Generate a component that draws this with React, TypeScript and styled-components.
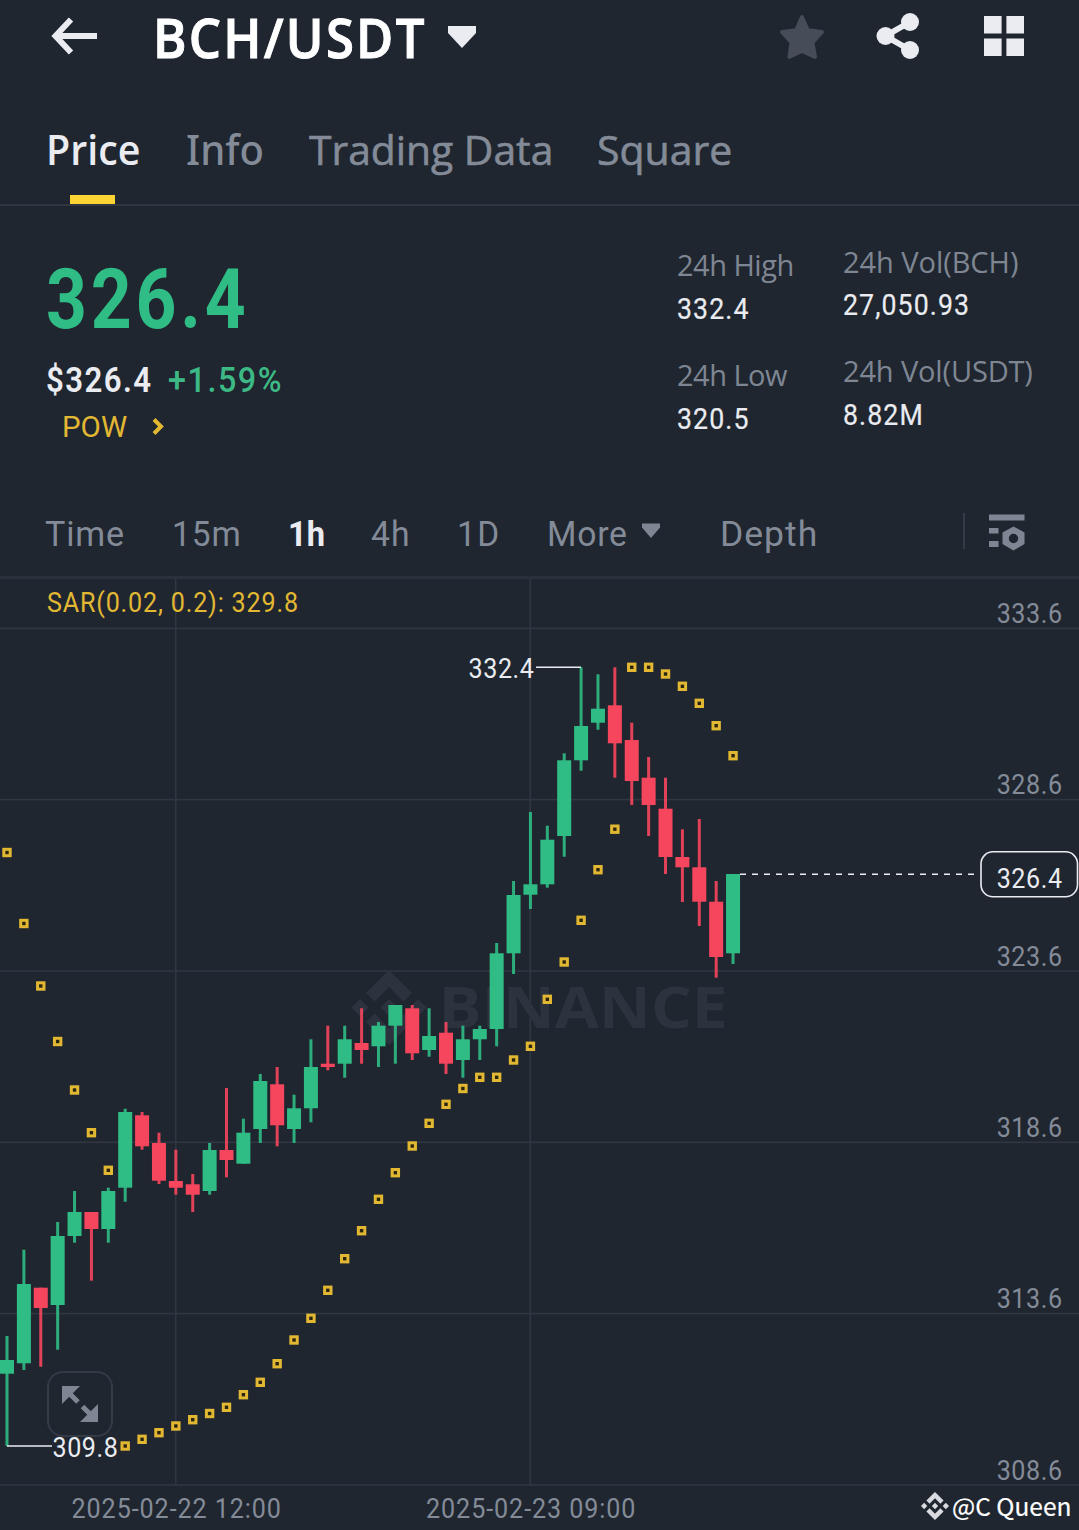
import React from "react";
import styled, { createGlobalStyle } from "styled-components";

const c = {
  bg: "#1f262f",
  line: "#303742",
  text: "#eaecf1",
  muted: "#848b98",
  green: "#2fbd85",
  red: "#f6465d",
  yellow: "#e2b833",
};

const din = `Roboto, "Liberation Sans", sans-serif`;
const plex = `"Open Sans", "Noto Sans", sans-serif`;

const Global = createGlobalStyle`
  body { margin: 0; background: ${c.bg}; }
  * { box-sizing: border-box; }
`;

const Page = styled.main`
  width: 1079px;
  height: 1530px;
  overflow: hidden;
  display: flex;
  flex-direction: column;
  background: ${c.bg};
  color: ${c.text};
  font-family: ${din};
`;

const Label = styled.span<{
  $size: number;
  $weight?: number;
  $color?: string;
  $spacing?: number;
  $font?: string;
  $lh?: number;
  $stretch?: number;
  $stroke?: number;
}>`
  display: block;
  white-space: nowrap;
  font-family: ${(p) => p.$font ?? din};
  font-size: ${(p) => p.$size}px;
  font-weight: ${(p) => p.$weight ?? 400};
  color: ${(p) => p.$color ?? c.text};
  letter-spacing: ${(p) => p.$spacing ?? 0}px;
  line-height: ${(p) => p.$lh ?? 30}px;
  transform: scaleX(${(p) => p.$stretch ?? 1});
  transform-origin: left center;
  -webkit-text-stroke: ${(p) => p.$stroke ?? 0}px currentColor;
`;

const Header = styled.header`
  flex: none;
  height: 76px;
  padding: 0 55px 4px 51px;
  display: flex;
  align-items: center;
`;

const PairButton = styled.div`
  width: 323px;
  margin-left: 56px;
  padding-top: 1px;
  display: flex;
  align-items: center;
  justify-content: space-between;
`;

const PairName = styled.div`
  width: 280px;
  padding-top: 2px;
`;

const Actions = styled.div`
  margin-left: auto;
  display: flex;
  align-items: center;
`;

const ActionIcon = styled.svg<{ $gap?: number }>`
  display: block;
  flex: none;
  overflow: visible;
  margin-left: ${(p) => p.$gap ?? 0}px;
`;

const TabBar = styled.nav`
  flex: none;
  height: 130px;
  padding: 52px 0 0 46px;
  display: grid;
  grid-template-columns: 140px 123px 288px 1fr;
  border-bottom: 2px solid #303742;
`;

const Tab = styled.div`
  display: flex;
  flex-direction: column;
`;

const TabMark = styled.i`
  width: 45px;
  height: 9px;
  margin: 25px 0 0 24px;
  background: #fcd535;
`;

const Summary = styled.section`
  flex: none;
  height: 284px;
  display: grid;
  grid-template-columns: 631px 166px 1fr;
  padding-left: 46px;
`;

const PriceColumn = styled.div`
  padding-top: 52px;
`;

const FiatRow = styled.div`
  display: grid;
  grid-template-columns: 122px 1fr;
  margin-top: 18px;
`;

const TagRow = styled.div`
  display: flex;
  align-items: center;
  height: 32px;
  margin-top: 11px;
  padding-left: 16px;
`;

const TagName = styled.div`
  width: 90px;
`;

const StatColumn = styled.div<{ $top: number; $gap: number }>`
  display: flex;
  flex-direction: column;
  gap: ${(p) => p.$gap}px;
  padding-top: ${(p) => p.$top}px;
`;

const Stat = styled.div`
  display: flex;
  flex-direction: column;
  gap: 13.5px;
`;

const Periods = styled.div`
  flex: none;
  height: 89px;
  padding-left: 45px;
  display: grid;
  grid-template-columns: 127px 116px 83px 86px 90px 95px 78px 243px 26px 1fr;
  align-items: center;
  border-bottom: 3px solid #2b313c;
`;

const PeriodName = styled.div`
  padding-top: 2px;
`;

const Divider = styled.i`
  width: 2px;
  height: 36px;
  margin-bottom: 4px;
  background: #343b46;
`;

const ChartBox = styled.section`
  position: relative;
  flex: none;
  height: 951px;
`;

const ChartSvg = styled.svg`
  display: block;
`;

const ExpandButton = styled.button`
  position: absolute;
  left: 47px;
  top: 792px;
  width: 66px;
  height: 66px;
  padding: 0;
  display: grid;
  place-items: center;
  border: 2.5px solid #343a46;
  border-radius: 16px;
  background: transparent;
`;

const Credit = styled.div`
  position: absolute;
  left: 921px;
  top: 911px;
  height: 32px;
  display: flex;
  align-items: center;
  gap: 3px;
`;

const LOGO =
  "M16.624 13.9202l2.7175 2.7154-7.353 7.353-7.353-7.352 2.7175-2.7164 4.6355 4.6595 4.6356-4.6595zm4.6366-4.6366L24 12l-2.7154 2.7164L18.5682 12l2.6924-2.7164zm-9.272.001l2.7163 2.6914-2.7164 2.7174v-.001L9.2721 12l2.7164-2.7154zm-9.2722-.001L5.4088 12l-2.6914 2.6924L0 12l2.7164-2.7164zM11.9885.0115l7.353 7.329-2.7174 2.7154-4.6356-4.6356-4.6355 4.6595-2.7174-2.7154 7.353-7.353z";

/* rising?, wick top, body top, body bottom, wick bottom */
type Candle = [0 | 1, number, number, number, number];
const candles: Candle[] = [
  [1, 1336, 1360, 1373.7, 1446],
  [1, 1249.7, 1284, 1363.3, 1370],
  [0, 1287.7, 1287.7, 1308, 1366.7],
  [1, 1222, 1236, 1305, 1349.7],
  [1, 1191, 1212, 1236, 1242.7],
  [0, 1212, 1212, 1229, 1280.7],
  [1, 1187.7, 1191, 1229, 1242.7],
  [1, 1108.7, 1112, 1187.7, 1201.7],
  [0, 1112, 1115.3, 1146.3, 1149.7],
  [0, 1132.7, 1143, 1180.7, 1184],
  [0, 1149.7, 1181, 1187.7, 1194.7],
  [0, 1174, 1184.3, 1194.7, 1212],
  [1, 1143, 1150, 1191, 1194.7],
  [0, 1088, 1150, 1160, 1177.3],
  [1, 1118.7, 1132.7, 1163.7, 1163.7],
  [1, 1074, 1081, 1129, 1143],
  [0, 1067, 1084.3, 1125.3, 1146.3],
  [1, 1094.7, 1108.3, 1129, 1143],
  [1, 1039.3, 1067, 1108.3, 1122.3],
  [0, 1025.7, 1063.7, 1067, 1070.3],
  [1, 1025.7, 1039.3, 1063.7, 1077.7],
  [0, 1008.3, 1043, 1050, 1063.7],
  [1, 1022, 1025.7, 1046.3, 1067],
  [1, 1005, 1005, 1025.7, 1063.7],
  [0, 1005, 1008.3, 1053.3, 1060],
  [1, 1008.3, 1036, 1050, 1056.7],
  [0, 1022, 1032.7, 1063.7, 1074],
  [1, 1025.7, 1039.3, 1060, 1077.7],
  [1, 1025.7, 1029, 1039.3, 1060],
  [1, 943, 953.3, 1029, 1046.3],
  [1, 881, 895, 953.3, 974],
  [1, 812, 884.3, 894.7, 909],
  [1, 825.7, 839.7, 884.3, 887.7],
  [1, 753.3, 760.3, 836, 856.7],
  [1, 667.3, 726, 760.3, 770.7],
  [1, 674.3, 708.7, 722.7, 729.7],
  [0, 667.3, 705.3, 743.3, 777.7],
  [0, 722.7, 740, 781, 805],
  [0, 757, 777.7, 805, 836],
  [0, 777.7, 808.7, 857, 874],
  [0, 829.3, 857, 867.3, 902],
  [0, 819, 867.3, 901.7, 926],
  [0, 881, 901.7, 957, 977.7],
  [1, 874, 874, 953.3, 964],
];

const sar = [
  852.5, 923.5, 986, 1041.5, 1090, 1132.7, 1170.3, 1446, 1439.3, 1432.7, 1426,
  1419.7, 1413.5, 1407.3, 1394.7, 1382.3, 1363.7, 1340, 1318.3, 1290.3, 1258.7,
  1230.7, 1199.3, 1172.7, 1146, 1123.3, 1104.3, 1088.5, 1077.3, 1077.3, 1060,
  1046.3, 999.3, 962, 920.3, 869.7, 829.2, 667.3, 667.3, 674, 686.3, 703.3,
  725.7, 755.7,
];

const levels: [string, number][] = [
  ["333.6", 628.4],
  ["328.6", 799.6],
  ["323.6", 971],
  ["318.6", 1142.3],
  ["313.6", 1313.6],
  ["308.6", 1485],
];

const slot = (i: number) => 7 + i * 16.885;

const NoteText = styled.text<{ $color: string }>`
  font-family: ${din};
  font-size: 27px;
  fill: ${(p) => p.$color};
`;

const SQUEEZE = 0.93;

function Note(props: { x: number; y: number; width: number; color?: string; children: string }) {
  return (
    <NoteText
      $color={props.color ?? c.muted}
      transform={`translate(${props.x} ${props.y}) scale(${SQUEEZE} 1)`}
      textLength={props.width / SQUEEZE}
    >
      {props.children}
    </NoteText>
  );
}

function Chart() {
  return (
    <ChartSvg width="1079" height="951" viewBox="0 579 1079 951">
      {levels.map(([t, y]) => (
        <rect key={t} x="0" y={y - 0.8} width="1079" height="1.6" fill={c.line} />
      ))}
      {[175.7, 530.3].map((x) => (
        <rect key={x} x={x - 0.8} y="579" width="1.6" height="906" fill={c.line} />
      ))}
      <g fill="#2d333e">
        <path transform="translate(351.5 970) scale(3.13)" d={LOGO} />
        <text
          x="438.5"
          y="1028"
          textLength="289"
          lengthAdjust="spacingAndGlyphs"
          fontFamily='"Open Sans", sans-serif'
          fontWeight="700"
          fontSize="58"
        >
          BINANCE
        </text>
      </g>
      {candles.map(([up, h, t, b, l], i) => (
        <g key={i} fill={up ? c.green : c.red}>
          <rect x={slot(i) - 1.5} y={h} width="3" height={l - h} opacity="0.9" />
          <rect x={slot(i) - 7} y={t} width="14" height={b - t} />
        </g>
      ))}
      {sar.map((y, i) => (
        <rect
          key={i}
          x={slot(i) - 3.2}
          y={y - 3.2}
          width="6.4"
          height="6.4"
          fill="#2a2410"
          stroke={c.yellow}
          strokeWidth="3"
        />
      ))}
      {levels.map(([t, y]) => (
        <Note key={t} x={996.7} y={y - 5.5} width={65.3}>
          {t}
        </Note>
      ))}
      <Note x={47} y={612} width={251} color={c.yellow}>
        SAR(0.02, 0.2): 329.8
      </Note>
      <path d="M536 667.3H581M7 1446H52" stroke={c.text} strokeWidth="1.6" />
      <Note x={468.6} y={677.8} width={65.3} color={c.text}>332.4</Note>
      <Note x={52.5} y={1456.8} width={65.3} color={c.text}>309.8</Note>
      <path d="M740 874.2H975" stroke={c.text} strokeWidth="1.6" strokeDasharray="6 6" />
      <rect x="981" y="851.8" width="96.5" height="45" rx="12" fill={c.bg} stroke={c.text} strokeWidth="1.6" />
      <Note x={996.7} y={887.8} width={65.3} color={c.text}>326.4</Note>
      <Note x={71.5} y={1517.8} width={209.5}>2025-02-22 12:00</Note>
      <Note x={426} y={1517.8} width={209.5}>2025-02-23 09:00</Note>
    </ChartSvg>
  );
}

const tabs = [
  { name: "Price", weight: 600, font: plex, stretch: 0.96, stroke: 0 },
  { name: "Info", weight: 500, font: `"Noto Sans", sans-serif`, stretch: 0.975, stroke: 0 },
  { name: "Trading Data", weight: 500, font: plex, stretch: 0.995, stroke: 0.6 },
  { name: "Square", weight: 500, font: plex, stretch: 1, stroke: 0.6 },
];

const periods = [
  { name: "Time", spacing: 0.9, stretch: 0.96 },
  { name: "15m", spacing: 1, stretch: 0.94 },
  { name: "1h", spacing: 0, stretch: 0.92 },
  { name: "4h", spacing: 1, stretch: 0.95 },
  { name: "1D", spacing: 1.5, stretch: 0.94 },
  { name: "More", spacing: 0.8, stretch: 0.95 },
];

function StatItem(props: { name: string; value: string; spacing: number }) {
  return (
    <Stat>
      <Label $size={29} $font={plex} $color="#7f8693" $spacing={props.spacing}>
        {props.name}
      </Label>
      <Label $size={29.5} $stroke={0.2} $spacing={1.2} $stretch={0.905}>
        {props.value}
      </Label>
    </Stat>
  );
}

export default function App() {
  return (
    <Page>
      <Global />
      <Header>
        <ActionIcon width="46" height="38" viewBox="0 0 46 38">
          <path d="M46 19H5M20 2.5L4.5 19L20 35.5" fill="none" stroke={c.text} strokeWidth="6" />
        </ActionIcon>
        <PairButton>
          <PairName>
            <Label
              $size={53.5}
              $weight={600}
              $font={plex}
              $color="#fff"
              $lh={60}
              $spacing={2.4}
              $stretch={0.95}
              $stroke={1}
            >
              BCH/USDT
            </Label>
          </PairName>
          <ActionIcon width="28" height="22" viewBox="0 0 28 22">
            <path d="M0 0H28V7L14 22L0 7Z" fill={c.text} />
          </ActionIcon>
        </PairButton>
        <Actions>
          <ActionIcon width="46" height="46" viewBox="0 0 46 46">
            <path
              d="M23 4L28.8 17.2L43 19L33.5 29.5L36 43.8L23 38L10.500 43.800L12.500 29.500L3 19L17.200 17.200Z"
              fill="#474d58"
              stroke="#474d58"
              strokeWidth="4"
              strokeLinejoin="round"
            />
          </ActionIcon>
          <ActionIcon $gap={51} width="44" height="46" viewBox="0 0 44 46">
            <path d="M34 9L9.5 23L34 37" fill="none" stroke={c.text} strokeWidth="6" />
            <g fill={c.text}>
              <circle cx="34" cy="9" r="9" />
              <circle cx="9.5" cy="23" r="9" />
              <circle cx="34" cy="37" r="9" />
            </g>
          </ActionIcon>
          <ActionIcon $gap={64} width="40" height="40" viewBox="0 0 40 40">
            <path
              d="M0 0H17.6V17.6H0ZM22.4 0H40V17.6H22.4ZM0 22.4H17.6V40H0ZM22.4 22.4H40V40H22.4Z"
              fill={c.text}
            />
          </ActionIcon>
        </Actions>
      </Header>

      <TabBar>
        {tabs.map((t, i) => (
          <Tab key={t.name}>
            <Label
              $size={41}
              $weight={t.weight}
              $font={t.font}
              $stretch={t.stretch}
              $stroke={t.stroke}
              $lh={42}
              $color={i ? c.muted : c.text}
            >
              {t.name}
            </Label>
            {i === 0 && <TabMark />}
          </Tab>
        ))}
      </TabBar>

      <Summary>
        <PriceColumn>
          <Label $size={83} $weight={700} $lh={84} $color={c.green} $stretch={0.86} $spacing={4.4}>
            326.4
          </Label>
          <FiatRow>
            <Label $size={35.5} $weight={600} $lh={40} $stretch={0.88} $spacing={1.6}>$326.4</Label>
            <Label $size={35.5} $weight={500} $lh={40} $color="#3cb985" $stretch={0.91} $spacing={1.7}>
              +1.59%
            </Label>
          </FiatRow>
          <TagRow>
            <TagName>
              <Label $size={29.5} $color={c.yellow}>POW</Label>
            </TagName>
            <ActionIcon width="12" height="18" viewBox="0 0 12 18">
              <path d="M2 1.5L9 8.500L2 15.500" fill="none" stroke={c.yellow} strokeWidth="4" />
            </ActionIcon>
          </TagRow>
        </PriceColumn>
        <StatColumn $top={44} $gap={36.5}>
          <StatItem name="24h High" value="332.4" spacing={-0.5} />
          <StatItem name="24h Low" value="320.5" spacing={-0.5} />
        </StatColumn>
        <StatColumn $top={40.5} $gap={36}>
          <StatItem name="24h Vol(BCH)" value="27,050.93" spacing={-0.05} />
          <StatItem name="24h Vol(USDT)" value="8.82M" spacing={-0.15} />
        </StatColumn>
      </Summary>

      <Periods>
        {periods.map((p) => (
          <PeriodName key={p.name}>
            <Label
              $size={35.5}
              $lh={40}
              $spacing={p.spacing}
              $stretch={p.stretch}
              $weight={p.name === "1h" ? 700 : 400}
              $color={p.name === "1h" ? c.text : c.muted}
            >
              {p.name}
            </Label>
          </PeriodName>
        ))}
        <ActionIcon width="18" height="20" viewBox="0 0 18 20">
          <path d="M0 0.5H18V4.5L9 15L0 4.5Z" fill="#7f8693" />
        </ActionIcon>
        <PeriodName>
          <Label $size={35.5} $lh={40} $spacing={1} $color={c.muted}>Depth</Label>
        </PeriodName>
        <Divider />
        <ActionIcon width="36" height="38" viewBox="0 0 36 38">
          <path
            fillRule="evenodd"
            fill="#7f8693"
            d="M0 .5H35.5V6.5H0ZM0 14H9.5V19.5H0ZM0 27H9.5V33H0ZM24.5 12.5L35.5 18.5V30L24.5 36.5L13.5 30V18.5ZM24.5 19.8A4.7 4.7 0 1 0 24.5 29.2A4.7 4.7 0 1 0 24.5 19.8Z"
          />
        </ActionIcon>
      </Periods>

      <ChartBox>
        <Chart />
        <ExpandButton aria-label="Expand">
          <svg width="38" height="38" viewBox="0 0 38 38">
            <g fill="#7f8592">
              <path d="M1 1H19L1 19Z" />
              <path d="M37 19V37H19Z" />
            </g>
            <path d="M7 7L17 17M21.5 21.5L31 31" stroke="#7f8592" strokeWidth="5" />
          </svg>
        </ExpandButton>
        <Credit>
          <svg width="28" height="28" viewBox="0 0 24 24">
            <path d={LOGO} fill="#d9dbe0" />
          </svg>
          <Label
            $size={24.5}
            $stroke={0.2}
            $font={`"Noto Sans CJK SC", sans-serif`}
            $color="#fff"
            $lh={30}
          >
            @C Queen
          </Label>
        </Credit>
      </ChartBox>
    </Page>
  );
}
